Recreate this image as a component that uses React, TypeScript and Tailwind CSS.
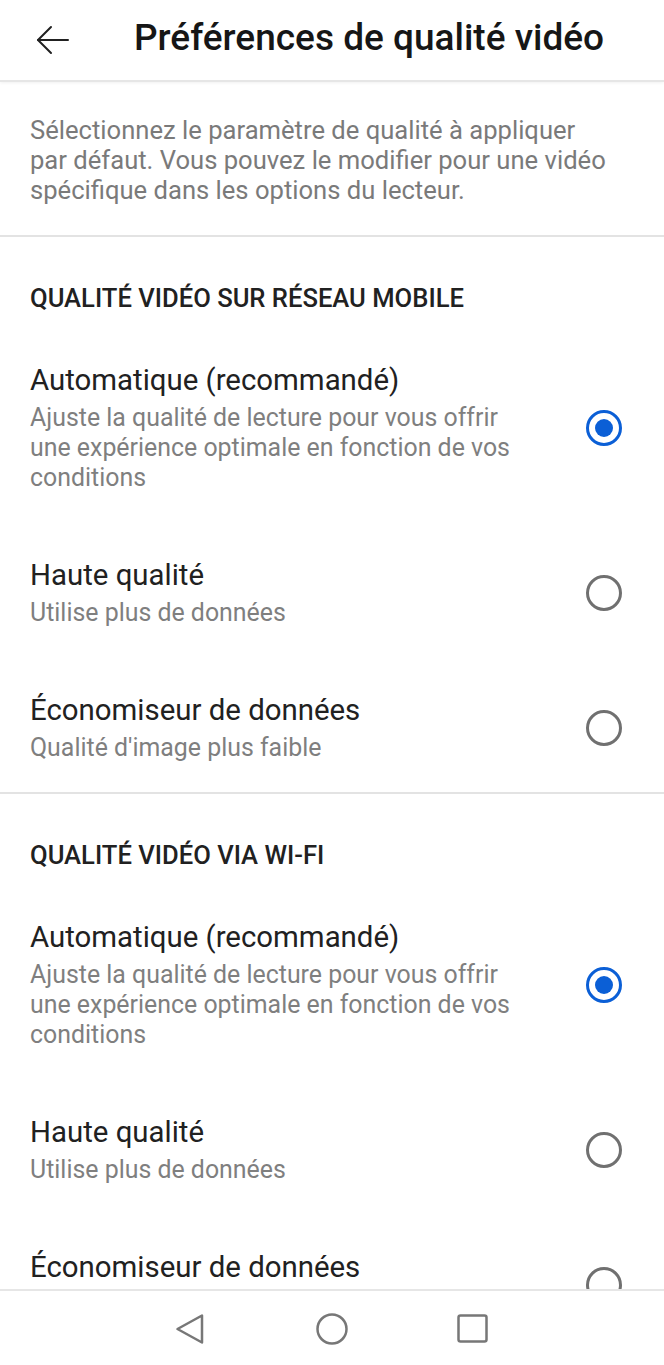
import React from "react";

const font = { fontFamily: "Roboto, 'Noto Sans', sans-serif" };

function Radio({ checked }: { checked: boolean }) {
  return checked ? (
    <div className="w-[36px] h-[36px] rounded-full border-[3.5px] border-[#0b5fd6] flex items-center justify-center shrink-0">
      <div className="w-[18px] h-[18px] rounded-full bg-[#0b5fd6]" />
    </div>
  ) : (
    <div className="w-[36px] h-[36px] rounded-full border-[3px] border-[#707070] shrink-0" />
  );
}

function Item({
  title,
  subtitle,
  checked,
}: {
  title: string;
  subtitle?: string;
  checked: boolean;
}) {
  return (
    <div className="flex items-center justify-between pl-[30px] pr-[42px] py-[32px] last:pb-[29px]">
      <div className="flex flex-col max-w-[505px]">
        <div className="text-[29.4px] leading-[36px] text-[#212121]">{title}</div>
        {subtitle && (
          <div className="mt-[5px] text-[24.9px] leading-[30px] text-[#7f7f7f]">{subtitle}</div>
        )}
      </div>
      <Radio checked={checked} />
    </div>
  );
}

function Section({ heading, last }: { heading: string; last?: boolean }) {
  return (
    <div className={last ? "" : "border-b-[2px] border-[#e3e3e3]"}>
      <div className="pl-[30px] pt-[46px] pb-[17px] text-[25.6px] leading-[30px] font-medium text-[#212121]">
        {heading}
      </div>
      <Item
        title="Automatique (recommandé)"
        subtitle="Ajuste la qualité de lecture pour vous offrir une expérience optimale en fonction de vos conditions"
        checked
      />
      <Item title="Haute qualité" subtitle="Utilise plus de données" checked={false} />
      <Item title="Économiseur de données" subtitle="Qualité d'image plus faible" checked={false} />
    </div>
  );
}

export default function App() {
  return (
    <div className="w-[664px] h-[1365px] bg-white flex flex-col overflow-hidden" style={font}>
      <div className="h-[82px] shrink-0 flex items-center border-b-[2px] border-[#e6e6e6] shadow-[0_1px_3px_rgba(0,0,0,0.06)] relative z-10">
        <div className="w-[134px] flex items-center pl-[36px]">
          <svg width="33" height="30" viewBox="0 0 33 30" fill="none" stroke="#212121" strokeWidth="2" strokeLinecap="round" strokeLinejoin="round">
            <path d="M2 15H32" />
            <path d="M15 2L2 15L15 28" />
          </svg>
        </div>
        <div className="text-[37px] leading-[40px] font-medium text-[#161616] -mt-[4px]">
          Préférences de qualité vidéo
        </div>
      </div>
      <div className="flex-1 overflow-hidden">
        <div className="border-b-[2px] border-[#e3e3e3] pl-[30px] pr-[50px] pt-[33px] pb-[30px] text-[25.6px] leading-[30px] text-[#7a7a7a]">
          Sélectionnez le paramètre de qualité à appliquer par défaut. Vous pouvez le modifier pour une vidéo spécifique dans les options du lecteur.
        </div>
        <Section heading="QUALITÉ VIDÉO SUR RÉSEAU MOBILE" />
        <Section heading="QUALITÉ VIDÉO VIA WI-FI" last />
      </div>
      <div className="h-[76px] shrink-0 border-t-[2px] border-[#e6e6e6] bg-white flex items-center">
        <div className="w-[664px] h-full relative">
          <svg className="absolute left-[175px] top-[22px]" width="30" height="32" viewBox="0 0 30 32" fill="none" stroke="#777" strokeWidth="2.5" strokeLinejoin="round">
            <path d="M27 2.5V29.5L2.5 16Z" />
          </svg>
          <svg className="absolute left-[316px] top-[22px]" width="32" height="32" viewBox="0 0 32 32" fill="none" stroke="#777" strokeWidth="2.5">
            <circle cx="16" cy="16" r="14.5" />
          </svg>
          <svg className="absolute left-[457px] top-[23px]" width="31" height="29" viewBox="0 0 31 29" fill="none" stroke="#777" strokeWidth="2.5">
            <rect x="1.5" y="1.5" width="28" height="26" rx="2" />
          </svg>
        </div>
      </div>
    </div>
  );
}
